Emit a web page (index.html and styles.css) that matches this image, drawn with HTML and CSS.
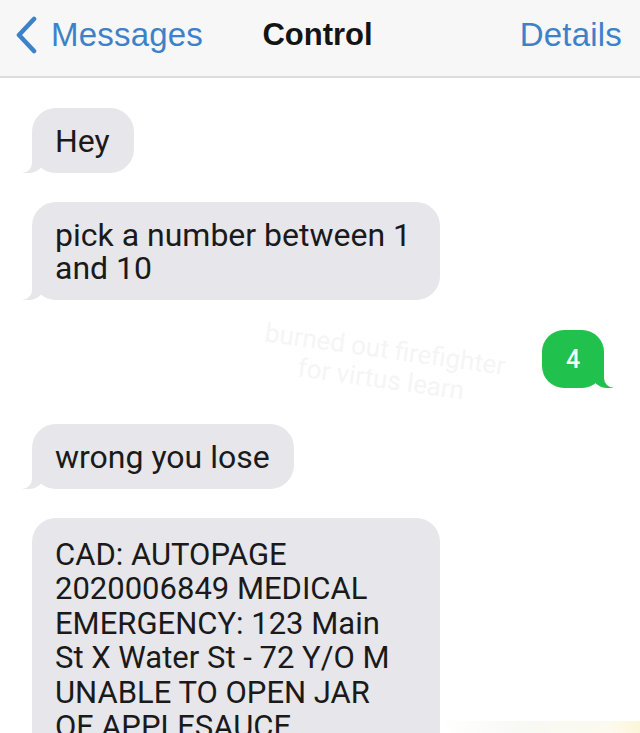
FILE: index.html
```html
<!DOCTYPE html>
<html>
<head>
<meta charset="utf-8">
<link rel="stylesheet" href="styles.css">
</head>
<body>
<div class="screen">
  <header class="nav">
    <div class="nav-back">
      <svg class="chevron" width="26" height="38" viewBox="0 0 26 38">
        <path d="M21 3 L6 19 L21 35" fill="none" stroke="#3d82c8" stroke-width="4.6" stroke-linecap="round" stroke-linejoin="round"/>
      </svg>
      <span class="nav-link">Messages</span>
    </div>
    <div class="nav-title">Control</div>
    <div class="nav-right"><span class="nav-link">Details</span></div>
  </header>

  <main class="thread">
    <div class="row">
      <div class="bubble in">Hey</div>
    </div>
    <div class="row">
      <div class="bubble in">pick a number between 1 and 10</div>
    </div>
    <div class="row sent">
      <div class="bubble out">4</div>
    </div>
    <div class="row">
      <div class="bubble in">wrong you lose</div>
    </div>
    <div class="row">
      <div class="bubble in cad">CAD: AUTOPAGE 2020006849 MEDICAL EMERGENCY: 123 Main St X Water St - 72 Y/O M UNABLE TO OPEN JAR OF APPLESAUCE</div>
    </div>
  </main>

  <div class="watermark">
    <span>burned out firefighter</span>
    <span>for virtus learn</span>
  </div>
  <div class="glare"></div>
</div>
</body>
</html>
```

FILE: styles.css
```css
html, body {
  margin: 0;
  padding: 0;
  background: #ffffff;
}

.screen {
  position: relative;
  width: 640px;
  height: 733px;
  overflow: hidden;
  background: #ffffff;
  font-family: Roboto, "Liberation Sans", Arial, sans-serif;
}

.nav {
  height: 78px;
  box-sizing: border-box;
  padding: 0 18px 6px 13px;
  display: grid;
  grid-template-columns: 1fr auto 1fr;
  align-items: center;
  background: #f7f7f7;
  border-bottom: 2px solid #dcdcdc;
  font-family: "Liberation Sans", Arial, sans-serif;
}

.nav-back {
  display: flex;
  align-items: center;
  gap: 12px;
}

.chevron {
  display: block;
}

.nav-link {
  color: #3d82c8;
  font-size: 33px;
  letter-spacing: 0.2px;
}

.nav-title {
  color: #141414;
  font-size: 31px;
  font-weight: bold;
}

.nav-right {
  display: flex;
  justify-content: flex-end;
}

.thread {
  display: flex;
  flex-direction: column;
  gap: 29px;
  padding: 30px 36px 0 32px;
}

.row {
  display: flex;
}

.row.sent {
  justify-content: flex-end;
  margin-top: 1px;
  margin-bottom: 7px;
}

.bubble {
  position: relative;
  max-width: 408px;
  box-sizing: border-box;
  padding: 17px 24px 15px 23px;
  border-radius: 24px;
  font-size: 32px;
  line-height: 33px;
  color: #1a1a1a;
}

.bubble.in {
  background: #e6e6eb;
}

.bubble.cad {
  font-size: 31px;
  line-height: 34.4px;
  padding-top: 20px;
  border-radius: 24px 24px 0 0;
}

.bubble.in::before {
  content: "";
  position: absolute;
  bottom: 0;
  left: -9px;
  width: 22px;
  height: 22px;
  background: #e6e6eb;
  border-bottom-right-radius: 16px;
}

.bubble.in::after {
  content: "";
  position: absolute;
  bottom: 0;
  left: -13px;
  width: 13px;
  height: 24px;
  background: #ffffff;
  border-bottom-right-radius: 10px;
}

.bubble.cad::before,
.bubble.cad::after {
  display: none;
}

.bubble.out {
  width: 62px;
  height: 58px;
  padding: 0;
  display: flex;
  align-items: center;
  justify-content: center;
  background: #20c14c;
  color: #f2fff4;
  font-size: 25px;
  font-weight: 500;
  border-radius: 22px;
}

.bubble.out::before {
  content: "";
  position: absolute;
  bottom: 0;
  right: -9px;
  width: 22px;
  height: 22px;
  background: #20c14c;
  border-bottom-left-radius: 16px;
}

.bubble.out::after {
  content: "";
  position: absolute;
  bottom: 0;
  right: -14px;
  width: 14px;
  height: 24px;
  background: #ffffff;
  border-bottom-left-radius: 10px;
}

.watermark {
  position: absolute;
  left: 262px;
  top: 334px;
  display: flex;
  flex-direction: column;
  align-items: center;
  transform: rotate(8deg);
  color: #f5f5f5;
  font-size: 26px;
  line-height: 30px;
  pointer-events: none;
}

.glare {
  position: absolute;
  left: 440px;
  right: 0;
  bottom: 0;
  height: 12px;
  background: linear-gradient(90deg, rgba(248,248,246,0) 0%, #f8f8f5 40%, #fcfaee 85%, #fbf6d8 100%);
}
```
